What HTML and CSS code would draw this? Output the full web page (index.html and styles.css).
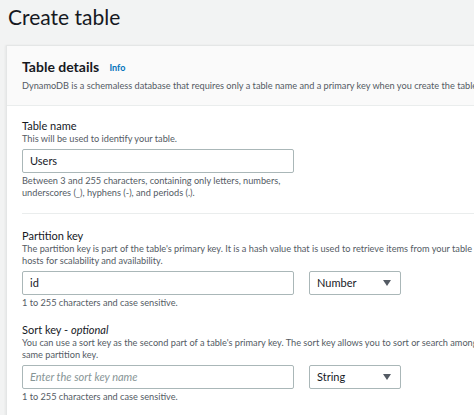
FILE: index.html
```html
<!DOCTYPE html>
<html lang="en">
<head>
  <meta charset="UTF-8" />
  <title>Create table</title>
  <link rel="stylesheet" href="styles.css">
</head>
<body>
  <h1 class="page-title">Create table</h1>

  <div class="card">
    <!-- Cabeçalho do card -->
    <div class="card-header">
      <h2 class="card-title">Table details <a href="#" class="info-link">Info</a></h2>
      <p class="card-desc">DynamoDB is a schemaless database that requires only a table name and a primary key when you create the table.</p>
    </div>

    <div class="card-body">
      <!-- Nome da tabela -->
      <div class="field">
        <label class="field-label">Table name</label>
        <div class="field-desc">This will be used to identify your table.</div>
        <div class="field-row">
          <div class="text-input">Users</div>
        </div>
        <div class="field-hint">Between 3 and 255 characters, containing only letters, numbers,<br>underscores (_), hyphens (-), and periods (.).</div>
      </div>

      <hr class="divider">

      <!-- Chave de partição -->
      <div class="field">
        <label class="field-label">Partition key</label>
        <div class="field-desc">The partition key is part of the table's primary key. It is a hash value that is used to retrieve items from your table and allocate data across<br>hosts for scalability and availability.</div>
        <div class="field-row">
          <div class="text-input">id</div>
          <div class="select">Number <span class="caret"></span></div>
        </div>
        <div class="field-hint">1 to 255 characters and case sensitive.</div>
      </div>

      <!-- Chave de ordenação -->
      <div class="field">
        <label class="field-label">Sort key - <i>optional</i></label>
        <div class="field-desc">You can use a sort key as the second part of a table's primary key. The sort key allows you to sort or search among all items sharing the<br>same partition key.</div>
        <div class="field-row">
          <div class="text-input placeholder">Enter the sort key name</div>
          <div class="select">String <span class="caret"></span></div>
        </div>
        <div class="field-hint">1 to 255 characters and case sensitive.</div>
      </div>
    </div>
  </div>
</body>
</html>
```

FILE: styles.css
```css
body {
  margin: 0;
  background: #f2f3f3;
  font-family: Lato, "Open Sans", sans-serif;
  color: #16191f;
  overflow: hidden;
  height: 415px;
}

.page-title {
  margin: 0;
  padding: 2px 8px 0;
  height: 43px;
  font-size: 21px;
  font-weight: 400;
  line-height: 30px;
}

.card {
  margin-left: 6px;
  width: 600px;
  height: 380px;
  border-left: 1px solid #e4e6e6;
  border-top: 1px solid #e4e6e6;
  box-shadow: -1px 0 2px rgba(0, 0, 0, 0.05);
  background: #fff;
}

.card-header {
  background: #fafafa;
  border-bottom: 1px solid #eaeded;
  padding: 12px 15px 0;
  height: 47px;
}

.card-title {
  margin: 0;
  font-size: 14px;
  font-weight: 700;
  line-height: 18px;
}

.info-link {
  margin-left: 7px;
  font-size: 9px;
  color: #0073bb;
  text-decoration: none;
  vertical-align: 1px;
}

.card-desc {
  margin: 2px 0 0;
  font-size: 9.2px;
  color: #545b64;
  line-height: 14px;
  white-space: nowrap;
}

.card-body {
  padding: 13px 15px 0;
}

.field {
  margin-bottom: 14px;
}

.field-label {
  display: block;
  font-size: 11px;
  line-height: 14px;
}

.field-desc,
.field-hint {
  font-size: 9.2px;
  line-height: 12px;
  color: #545b64;
  white-space: nowrap;
}

.field-hint {
  margin-top: 2px;
}

.field-row {
  display: flex;
  gap: 15px;
  margin-top: 4px;
}

.text-input,
.select {
  box-sizing: border-box;
  height: 24px;
  border: 1px solid #aab7b8;
  border-radius: 2px;
  padding: 0 7px;
  font-size: 11px;
  line-height: 22px;
  background: #fff;
}

.text-input {
  width: 272px;
}

.placeholder {
  color: #879596;
  font-style: italic;
}

.select {
  width: 92px;
  display: flex;
  justify-content: space-between;
  align-items: center;
}

.caret {
  width: 0;
  height: 0;
  border-left: 4px solid transparent;
  border-right: 4px solid transparent;
  border-top: 6px solid #545b64;
  margin-right: 2px;
}

.divider {
  border: none;
  border-top: 1px solid #eaeded;
  margin: 1px 0 15px;
}
```
